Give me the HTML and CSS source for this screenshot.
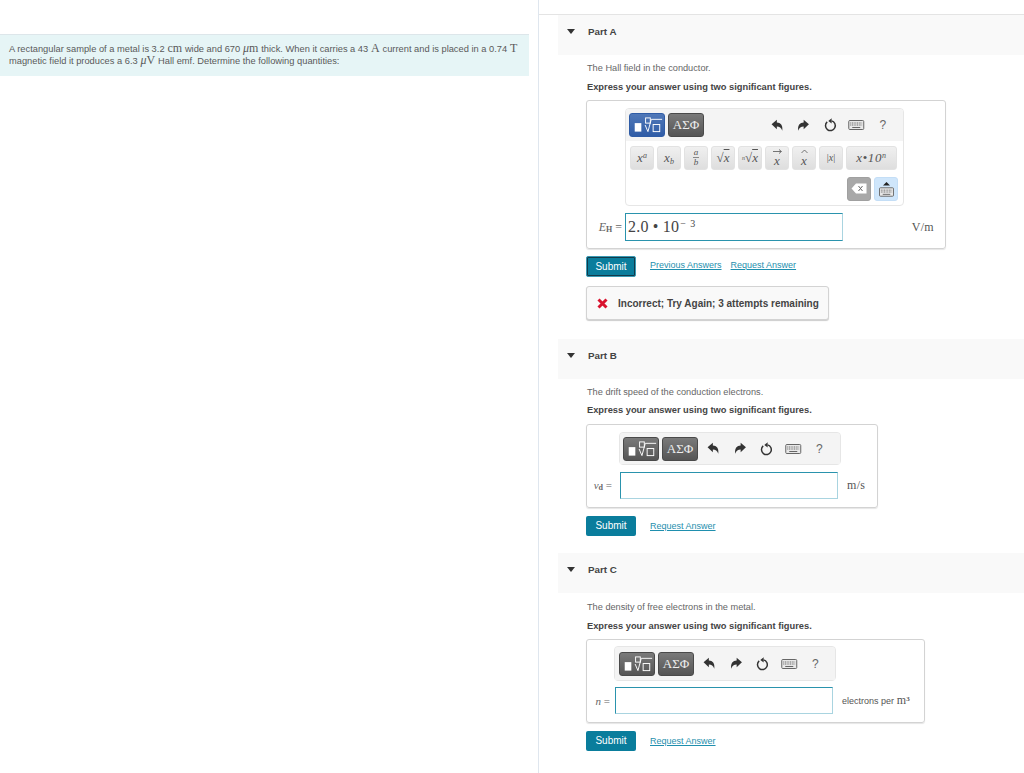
FILE: index.html
```html
<!DOCTYPE html>
<html lang="en">
<head>
<meta charset="utf-8">
<title>Hall effect</title>
<link rel="stylesheet" href="styles.css">
</head>
<body>
<svg class="defs" width="0" height="0" aria-hidden="true">
  <defs>
    <symbol id="undo" viewBox="0 0 16 16"><path d="M1 6.500 7.500 1v3.400c4.600 0 7.600 3.300 6.700 10.100-1.300-3.800-3.400-5.200-6.700-5.200V12.500z"/></symbol>
    <symbol id="redo" viewBox="0 0 16 16"><path d="M15 6.500 8.500 1v3.400C3.900 4.400.9 7.700 1.800 14.500c1.300-3.800 3.400-5.200 6.700-5.200V12.500z"/></symbol>
    <symbol id="reset" viewBox="0 0 16 16"><path d="M9.500 3.300A5.600 5.600 0 1 1 4.500 4.500" fill="none" stroke="currentColor" stroke-width="1.700"/><path d="M5.800 3.300 9.600.2v6.200z"/></symbol>
    <symbol id="keys" viewBox="0 0 16 10"><rect x=".5" y=".5" width="15" height="9" rx="1" fill="#e8e8e8" stroke="#666"/><path d="M2 3h12M2 5h12" stroke="#666" stroke-dasharray="1 .7"/><path d="M4 7.500h8" stroke="#666"/></symbol>
    <symbol id="template" viewBox="0 0 36 24"><rect x="5" y="10" width="7" height="9" fill="#fff"/><rect x="16.500" y="4.500" width="5" height="5.500" fill="none" stroke="#fff"/><path d="M16 12l3 7 3.500-13H34" fill="none" stroke="#fff"/><rect x="24.500" y="11.500" width="7" height="7.500" fill="none" stroke="#fff"/></symbol>
  </defs>
</svg>
<div class="page">
  <aside class="left">
    <div class="intro">A rectangular sample of a metal is 3.2 <span class="m">cm</span> wide and 670 <span class="m"><i>μ</i>m</span> thick. When it carries a 43 <span class="m">A</span> current and is placed in a 0.74 <span class="m">T</span> magnetic field it produces a 6.3 <span class="m"><i>μ</i>V</span> Hall emf. Determine the following quantities:</div>
  </aside>
  <main class="right">
    <section class="part part-a">
      <h2 class="part-head"><span class="caret"></span>Part A</h2>
      <div class="part-body">
        <p class="prompt">The Hall field in the conductor.</p>
        <p class="express">Express your answer using two significant figures.</p>
        <div class="answer answer-a">
          <div class="toolbar toolbar-full">
            <div class="tool-top">
              <button class="mode mode-on"><svg width="36" height="24"><use href="#template"/></svg></button>
              <button class="mode">ΑΣΦ</button>
              <span class="tool-icons tool-icons-end">
                <svg class="ico" width="13" height="13"><use href="#undo"/></svg>
                <svg class="ico" width="13" height="13"><use href="#redo"/></svg>
                <svg class="ico" width="14" height="14"><use href="#reset"/></svg>
                <svg class="ico" width="15" height="10"><use href="#keys"/></svg>
                <span class="ico help">?</span>
              </span>
            </div>
            <div class="tool-keys">
              <span class="key"><i>x<sup>a</sup></i></span>
              <span class="key"><i>x<sub>b</sub></i></span>
              <span class="key key-frac"><i>a</i><i class="den">b</i></span>
              <span class="key">√<i class="over">x</i></span>
              <span class="key"><sup class="root"><i>n</i></sup>√<i class="over">x</i></span>
              <span class="key key-acc"><svg width="9" height="5" viewBox="0 0 9 5"><path d="M0 2.500h8M6 .5l2.500 2-2.500 2" fill="none" stroke="#555" stroke-width=".8"/></svg><i>x</i></span>
              <span class="key key-acc"><svg width="7" height="5" viewBox="0 0 7 5"><path d="M.5 4 3.500 1l3 3" fill="none" stroke="#555" stroke-width=".8"/></svg><i>x</i></span>
              <span class="key key-abs">|<i>x</i>|</span>
              <span class="key key-wide"><i>x</i> • <i>10<sup>n</sup></i></span>
            </div>
            <div class="tool-keys tool-keys-end">
              <span class="key key-del"><svg width="16" height="11" viewBox="0 0 16 11"><path d="M5 .5h10.500v10H5L.5 5.500z" fill="#fff"/><path d="M7.500 3l4 5m0-5l-4 5" stroke="#666" fill="none"/></svg></span>
              <span class="key key-kbd"><svg width="15" height="16" viewBox="0 0 15 16"><path d="M7.500 1 11 4.500H4z" fill="#222"/><use href="#keys" x="0" y="6" width="15" height="10"/></svg></span>
            </div>
          </div>
          <div class="symbol"><i>E</i><span class="subroman">H</span> =</div>
          <div class="input input-filled">2.0 • 10<sup>− 3</sup></div>
          <div class="unit unit-serif">V/m</div>
        </div>
        <div class="actions actions-focus">
          <button class="submit submit-focus">Submit</button>
          <a class="link" href="#">Previous Answers</a>
          <a class="link" href="#">Request Answer</a>
        </div>
        <div class="feedback"><svg width="11" height="11" viewBox="0 0 11 11"><path d="M1.500 1.500l8 8m0-8l-8 8" stroke="#d9122e" stroke-width="3"/></svg>Incorrect; Try Again; 3 attempts remaining</div>
      </div>
    </section>

    <section class="part part-b">
      <h2 class="part-head"><span class="caret"></span>Part B</h2>
      <div class="part-body">
        <p class="prompt">The drift speed of the conduction electrons.</p>
        <p class="express">Express your answer using two significant figures.</p>
        <div class="answer answer-b">
          <div class="toolbar toolbar-mini">
            <div class="tool-top">
              <button class="mode"><svg width="36" height="24"><use href="#template"/></svg></button>
              <button class="mode">ΑΣΦ</button>
              <span class="tool-icons">
                <svg class="ico" width="13" height="13"><use href="#undo"/></svg>
                <svg class="ico" width="13" height="13"><use href="#redo"/></svg>
                <svg class="ico" width="14" height="14"><use href="#reset"/></svg>
                <svg class="ico" width="15" height="10"><use href="#keys"/></svg>
                <span class="ico help">?</span>
              </span>
            </div>
          </div>
          <div class="symbol"><i>v</i><span class="subroman">d</span> =</div>
          <div class="input"></div>
          <div class="unit unit-serif">m/s</div>
        </div>
        <div class="actions">
          <button class="submit">Submit</button>
          <a class="link" href="#">Request Answer</a>
        </div>
      </div>
    </section>

    <section class="part part-c">
      <h2 class="part-head"><span class="caret"></span>Part C</h2>
      <div class="part-body">
        <p class="prompt">The density of free electrons in the metal.</p>
        <p class="express">Express your answer using two significant figures.</p>
        <div class="answer answer-c">
          <div class="toolbar toolbar-mini">
            <div class="tool-top">
              <button class="mode"><svg width="36" height="24"><use href="#template"/></svg></button>
              <button class="mode">ΑΣΦ</button>
              <span class="tool-icons">
                <svg class="ico" width="13" height="13"><use href="#undo"/></svg>
                <svg class="ico" width="13" height="13"><use href="#redo"/></svg>
                <svg class="ico" width="14" height="14"><use href="#reset"/></svg>
                <svg class="ico" width="15" height="10"><use href="#keys"/></svg>
                <span class="ico help">?</span>
              </span>
            </div>
          </div>
          <div class="symbol"><i>n</i> =</div>
          <div class="input"></div>
          <div class="unit">electrons per <span class="m">m<sup>3</sup></span></div>
        </div>
        <div class="actions">
          <button class="submit">Submit</button>
          <a class="link" href="#">Request Answer</a>
        </div>
      </div>
    </section>
  </main>
</div>
</body>
</html>
```

FILE: styles.css
```css
* { box-sizing: border-box; }
html, body { margin: 0; padding: 0; background: #fff; }
body { font-family: "Liberation Sans", Arial, sans-serif; color: #555; overflow: hidden; }
.defs { position: absolute; }
.page { display: flex; height: 773px; overflow: hidden; }

.left { width: 539px; flex: none; border-right: 1px solid #dfe6ee; padding: 34px 9px 0 0; }
.intro { background: #e6f5f6; border-top: 1px solid #dde6ea; height: 42px; padding: 8px 2px 0 9px; font-size: 9.300px; line-height: 12px; color: #5a5a5a; }
.m { font-family: "Liberation Serif", serif; font-size: 12px; line-height: 0; margin: 0 .25px; }

.right { flex: 1; min-width: 0; padding: 14px 0 0 19px; }
.part-a { border-top: 1px solid #e4e4e4; margin-left: -19px; padding-left: 19px; }
.part-b { margin-top: 19px; }
.part-c { margin-top: 17px; }
.part-head { display: flex; align-items: center; height: 40px; margin: 0 0 5px; padding: 0 0 8px 9px; background: #f9f9f9; font-size: 9.800px; font-weight: 700; color: #444; }
.part-c .part-head { margin-bottom: 6px; }
.caret { width: 0; height: 0; border-left: 4.500px solid transparent; border-right: 4.500px solid transparent; border-top: 5px solid #333; margin-right: 13px; }
.part-body { padding-left: 28px; }

.prompt, .express { margin: 0; height: 16px; line-height: 16px; padding-left: 1px; }
.prompt { font-size: 9.200px; color: #666; }
.express { margin-top: 3px; font-size: 9.300px; font-weight: 700; color: #444; }
.part-b .express { margin-top: 2px; }

.answer { display: grid; align-items: center; border: 1px solid #d3d3d3; border-radius: 3px; box-shadow: 0 1px 1px #e6e6e6; margin-top: 5px; padding: 7px 0; row-gap: 7px; }
.part-b .answer { margin-top: 6px; }
.answer-a { width: 360px; grid-template-columns: 38px 218px 1fr; }
.answer-b { width: 292px; grid-template-columns: 33px 218px 1fr; padding-bottom: 8px; }
.answer-c { width: 339px; grid-template-columns: 28px 218px 1fr; row-gap: 6px; padding: 6px 0 8px; }

.toolbar { grid-column: 2 / 4; justify-self: start; border: 1px solid #e6e6e6; border-radius: 4px; background: #fff; }
.toolbar-full { width: 279px; height: 98px; }
.toolbar-mini { width: 222px; margin-left: -1px; background: #f4f4f4; }
.tool-top { display: flex; align-items: center; gap: 3px; height: 32px; padding-left: 3px; background: #f4f4f4; border-radius: 3px 3px 0 0; }
.answer-b .tool-top { height: 31px; }
.answer-c .tool-top { height: 33px; padding-left: 4px; }
.mode { display: flex; align-items: center; justify-content: center; width: 36px; height: 24px; padding: 0; border: 1px solid #4a4a4a; border-radius: 3px; background: linear-gradient(#7a7a7a, #555); color: #eee; font-family: "Liberation Serif", serif; font-size: 13px; }
.mode-on { background: linear-gradient(#5078b8, #2f5ca6); border-color: #2f5ca6; }
.tool-icons { display: flex; align-items: center; margin-left: -1px; }
.tool-icons-end { margin-left: auto; margin-right: 7px; }
.ico { width: 26.500px; text-align: center; color: #333; fill: #333; }
.help { font-size: 12px; color: #666; }

.tool-keys { display: flex; gap: 3px; padding: 4.500px 0 0 4px; }
.tool-keys-end { justify-content: flex-end; padding: 7px 5px 0 0; }
.key { display: flex; align-items: center; justify-content: center; width: 24px; height: 24px; border: 1px solid #e2e2e2; border-radius: 3px; background: linear-gradient(#f0f0f0, #dedede); font-family: "Liberation Serif", serif; font-size: 13px; color: #555; line-height: 1; white-space: nowrap; }
.key sup { font-size: 8px; vertical-align: 4px; line-height: 0; }
.key sub { font-size: 8px; vertical-align: -2px; line-height: 0; }
.key .root { vertical-align: 4px; font-size: 6px; }
.over { text-decoration: overline; }
.key-frac { flex-direction: column; font-size: 9px; }
.den { border-top: 1px solid #888; padding: 0 1px; }
.key-acc { flex-direction: column; gap: 0; }
.key-abs { font-size: 10px; }
.key-wide { width: 51px; font-size: 13px; letter-spacing: .6px; }
.key-del { background: #a8a8a8; border-color: #a0a0a0; }
.key-kbd { background: #cfe6fb; border-color: #c4def6; }

.symbol { font-family: "Liberation Serif", serif; font-size: 11px; color: #666; text-align: right; padding-right: 3px; white-space: nowrap; }
.answer-a .symbol { font-size: 12px; }
.answer-b .symbol { padding-right: 8px; }
.answer-c .symbol { padding-right: 5px; }
.subroman { font-size: 8px; vertical-align: -1px; font-weight: 700; }
.input { height: 27px; border: 1px solid #a9d4e0; border-top-color: #2a93ad; border-left-color: #2a93ad; background: #fff; font-family: "Liberation Serif", serif; font-size: 16px; line-height: 26px; padding-left: 2px; color: #444; }
.input-filled { height: 28px; border-bottom-color: #2a93ad; letter-spacing: .2px; }
.input sup { font-size: 10px; vertical-align: 5px; line-height: 0; letter-spacing: 1px; margin-left: 1px; }
.unit { font-size: 9px; padding-left: 9px; white-space: nowrap; color: #555; }
.unit sup { font-size: 7px; line-height: 0; vertical-align: 3px; font-weight: 700; }
.unit-serif { font-family: "Liberation Serif", serif; font-size: 12px; letter-spacing: .3px; }
.answer-a .unit { text-align: right; padding-right: 11px; }

.actions { display: flex; align-items: center; gap: 9px; margin-top: 7px; height: 21px; }
.actions-focus { padding-bottom: 3px; }
.submit { width: 50px; height: 20px; padding: 0; margin-right: 5px; border: 0; border-radius: 2px; background: #0a7d9c; color: #fff; font-family: "Liberation Sans", Arial, sans-serif; font-size: 10px; }
.submit-focus { height: 21px; align-self: flex-start; border: 1px solid #3a9ab3; box-shadow: inset 0 0 0 1px #123a4a; }
.link { color: #1f8fae; font-size: 9px; text-decoration: underline; }
.feedback { display: flex; align-items: center; gap: 10px; width: 243px; height: 34px; margin-top: 9px; padding-left: 10px; border: 1px solid #d3d3d3; border-radius: 3px; background: #f9f9f9; box-shadow: 0 1px 1px #ccc; font-size: 10px; font-weight: 700; color: #444; white-space: nowrap; }
```
